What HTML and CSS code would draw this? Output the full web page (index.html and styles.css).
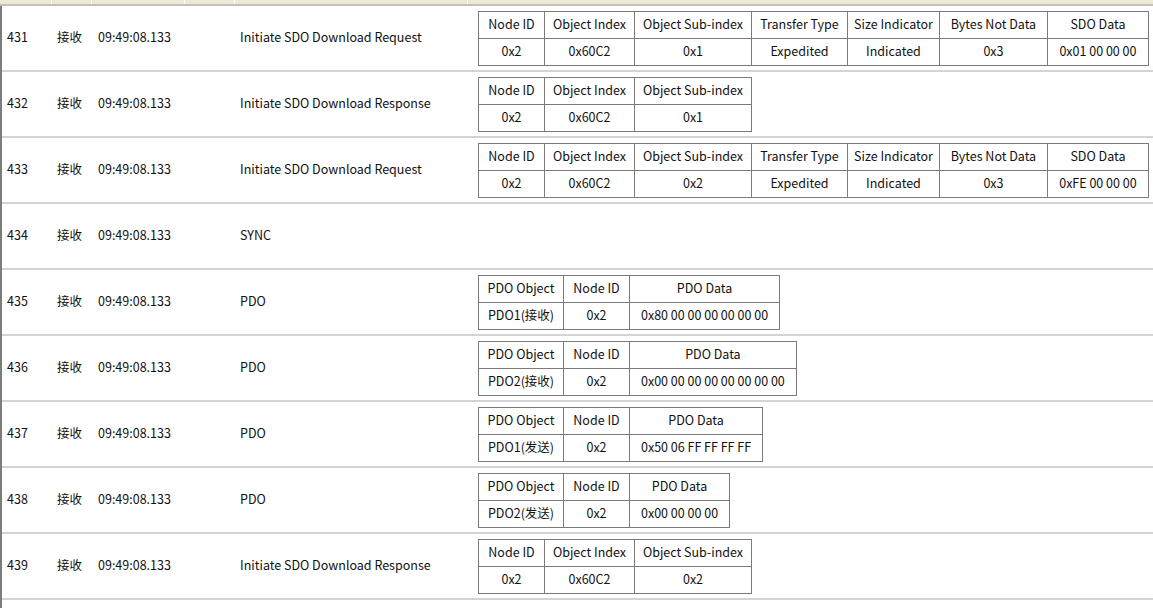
FILE: index.html
```html
<!DOCTYPE html>
<html lang="zh-CN">
<head>
    <meta charset="UTF-8">
    <title>CANopen 报文列表</title>
    <link rel="stylesheet" href="styles.css">
</head>
<body>
    <div class="list">
        <div class="list-head">
            <span></span><span></span><span></span><span></span><span></span><span></span>
        </div>

        <div class="row">
            <span class="cell">431</span>
            <span class="cell">接收</span>
            <span class="cell time">09:49:08.133</span>
            <span class="cell"></span>
            <span class="cell">Initiate SDO Download Request</span>
            <div class="detail">
                <table class="frame">
                    <tr><th class="col-node">Node ID</th><th class="col-index">Object Index</th><th class="col-sub">Object Sub-index</th><th class="col-type">Transfer Type</th><th class="col-size">Size Indicator</th><th class="col-bytes">Bytes Not Data</th><th class="col-sdo">SDO Data</th></tr>
                    <tr><td>0x2</td><td>0x60C2</td><td>0x1</td><td>Expedited</td><td>Indicated</td><td>0x3</td><td>0x01 00 00 00</td></tr>
                </table>
            </div>
        </div>

        <div class="row">
            <span class="cell">432</span>
            <span class="cell">接收</span>
            <span class="cell time">09:49:08.133</span>
            <span class="cell"></span>
            <span class="cell">Initiate SDO Download Response</span>
            <div class="detail">
                <table class="frame">
                    <tr><th class="col-node">Node ID</th><th class="col-index">Object Index</th><th class="col-sub">Object Sub-index</th></tr>
                    <tr><td>0x2</td><td>0x60C2</td><td>0x1</td></tr>
                </table>
            </div>
        </div>

        <div class="row">
            <span class="cell">433</span>
            <span class="cell">接收</span>
            <span class="cell time">09:49:08.133</span>
            <span class="cell"></span>
            <span class="cell">Initiate SDO Download Request</span>
            <div class="detail">
                <table class="frame">
                    <tr><th class="col-node">Node ID</th><th class="col-index">Object Index</th><th class="col-sub">Object Sub-index</th><th class="col-type">Transfer Type</th><th class="col-size">Size Indicator</th><th class="col-bytes">Bytes Not Data</th><th class="col-sdo">SDO Data</th></tr>
                    <tr><td>0x2</td><td>0x60C2</td><td>0x2</td><td>Expedited</td><td>Indicated</td><td>0x3</td><td>0xFE 00 00 00</td></tr>
                </table>
            </div>
        </div>

        <div class="row">
            <span class="cell">434</span>
            <span class="cell">接收</span>
            <span class="cell time">09:49:08.133</span>
            <span class="cell"></span>
            <span class="cell">SYNC</span>
            <div class="detail"></div>
        </div>

        <div class="row">
            <span class="cell">435</span>
            <span class="cell">接收</span>
            <span class="cell time">09:49:08.133</span>
            <span class="cell"></span>
            <span class="cell">PDO</span>
            <div class="detail">
                <table class="frame">
                    <tr><th class="col-pdo">PDO Object</th><th class="col-node">Node ID</th><th>PDO Data</th></tr>
                    <tr><td>PDO1(接收)</td><td>0x2</td><td>0x80 00 00 00 00 00 00</td></tr>
                </table>
            </div>
        </div>

        <div class="row">
            <span class="cell">436</span>
            <span class="cell">接收</span>
            <span class="cell time">09:49:08.133</span>
            <span class="cell"></span>
            <span class="cell">PDO</span>
            <div class="detail">
                <table class="frame">
                    <tr><th class="col-pdo">PDO Object</th><th class="col-node">Node ID</th><th>PDO Data</th></tr>
                    <tr><td>PDO2(接收)</td><td>0x2</td><td>0x00 00 00 00 00 00 00 00</td></tr>
                </table>
            </div>
        </div>

        <div class="row">
            <span class="cell">437</span>
            <span class="cell">接收</span>
            <span class="cell time">09:49:08.133</span>
            <span class="cell"></span>
            <span class="cell">PDO</span>
            <div class="detail">
                <table class="frame">
                    <tr><th class="col-pdo">PDO Object</th><th class="col-node">Node ID</th><th>PDO Data</th></tr>
                    <tr><td>PDO1(发送)</td><td>0x2</td><td>0x50 06 FF FF FF FF</td></tr>
                </table>
            </div>
        </div>

        <div class="row">
            <span class="cell">438</span>
            <span class="cell">接收</span>
            <span class="cell time">09:49:08.133</span>
            <span class="cell"></span>
            <span class="cell">PDO</span>
            <div class="detail">
                <table class="frame">
                    <tr><th class="col-pdo">PDO Object</th><th class="col-node">Node ID</th><th>PDO Data</th></tr>
                    <tr><td>PDO2(发送)</td><td>0x2</td><td>0x00 00 00 00</td></tr>
                </table>
            </div>
        </div>

        <div class="row">
            <span class="cell">439</span>
            <span class="cell">接收</span>
            <span class="cell time">09:49:08.133</span>
            <span class="cell"></span>
            <span class="cell">Initiate SDO Download Response</span>
            <div class="detail">
                <table class="frame">
                    <tr><th class="col-node">Node ID</th><th class="col-index">Object Index</th><th class="col-sub">Object Sub-index</th></tr>
                    <tr><td>0x2</td><td>0x60C2</td><td>0x2</td></tr>
                </table>
            </div>
        </div>
    </div>
</body>
</html>
```

FILE: styles.css
```css
:root {
    --grid-cols: 50px 40px 93px 50px 233px 1fr;
    --frame-border: #807a76;
}

* {
    box-sizing: border-box;
    margin: 0;
    padding: 0;
}

body {
    font-family: "Noto Sans CJK SC", "Noto Sans", sans-serif;
    font-size: 12.5px;
    line-height: 1.3;
    color: #111;
    background: #fff;
    overflow: hidden;
}

.list {
    height: 608px;
    border-left: 2px solid #7c7c7c;
}

.list-head {
    display: grid;
    grid-template-columns: var(--grid-cols);
    height: 6px;
    margin-left: -2px;
    padding-left: 2px;
    background: #ece9d8;
    border-bottom: 2px solid #c3c0b4;
}

.list-head span {
    border-right: 1px solid #fff;
}

.list-head span:last-child {
    border-right: none;
}

.row {
    display: grid;
    grid-template-columns: var(--grid-cols);
    align-items: center;
    height: 66px;
    border-bottom: 2px solid #d4d4d4;
}

.cell {
    padding-left: 5px;
    padding-bottom: 1px;
    white-space: nowrap;
}

.time {
    padding-left: 6px;
}

.detail {
    padding-left: 10px;
}

.frame {
    border-collapse: collapse;
    border: 1px solid var(--frame-border);
}

.frame th,
.frame td {
    height: 27px;
    padding: 0 6px 1px;
    border: 1px solid var(--frame-border);
    font-weight: normal;
    text-align: center;
    white-space: nowrap;
}

.frame td:last-child {
    padding: 0 11px 1px;
}

/* column widths as the capture tool sizes them */
.frame .col-node  { width: 66px; }
.frame .col-index { width: 90px; }
.frame .col-sub   { width: 117px; }
.frame .col-type  { width: 96px; }
.frame .col-size  { width: 91px; }
.frame .col-bytes { width: 108px; }
.frame .col-sdo   { width: 101px; }
.frame .col-pdo   { width: 85px; }
```
